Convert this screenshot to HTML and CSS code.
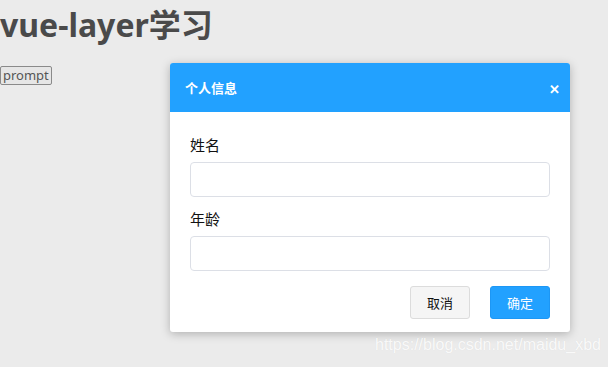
FILE: index.html
```html
<!DOCTYPE html>
<html lang="zh">
  <head>
    <meta charset="UTF-8" />
    <title>vue-layer学习</title>
    <link rel="stylesheet" href="styles.css">
  </head>
  <body>
    <h1>vue-layer学习</h1>
    <button class="promptBtn">prompt</button>

    <div class="layer">
      <div class="layerHead">
        <span class="layerTitle">个人信息</span>
        <span class="layerClose">&#x2715;</span>
      </div>
      <div class="layerBody">
        <label class="field">
          <span class="fieldLabel">姓名</span>
          <input class="fieldInput" type="text" />
        </label>
        <label class="field">
          <span class="fieldLabel">年龄</span>
          <input class="fieldInput" type="text" />
        </label>
        <div class="layerBtns">
          <button class="btn cancel">取消</button>
          <button class="btn ok">确定</button>
        </div>
      </div>
    </div>

    <span class="watermark">https://blog.csdn.net/maidu_xbd</span>
  </body>
</html>
```

FILE: styles.css
```css
* {
  box-sizing: border-box;
}
body {
  margin: 0;
  background-color: #ebebeb;
  font-family: "Noto Sans", "Noto Sans CJK SC", sans-serif;
  height: 367px;
  overflow: hidden;
  position: relative;
}
h1 {
  margin: 0;
  padding-top: 2px;
  font-size: 32px;
  line-height: 46px;
  color: #4a4a4a;
  font-weight: bold;
}
.promptBtn {
  margin-top: 18px;
  display: block;
  height: 19px;
  padding: 0 2px;
  font-family: "Noto Sans", "Noto Sans CJK SC", sans-serif;
  font-size: 13px;
  line-height: 15px;
  color: #555;
  background-color: #e6e6e6;
  border: 1px solid #8a8a8a;
  border-radius: 2px;
}
.layer {
  position: absolute;
  left: 170px;
  top: 63px;
  width: 400px;
  background-color: #fff;
  border-radius: 3px;
  box-shadow: 0 2px 10px rgba(0, 0, 0, 0.25);
  overflow: hidden;
}
.layerHead {
  height: 49px;
  background-color: #22a1ff;
  display: flex;
  align-items: center;
  justify-content: space-between;
  padding: 0 10px 0 15px;
  color: #fff;
}
.layerTitle {
  font-size: 13px;
  font-weight: bold;
}
.layerClose {
  font-size: 13px;
  font-weight: bold;
  padding-top: 2px;
}
.layerBody {
  padding: 21px 20px 13px;
}
.field {
  display: flex;
  flex-direction: column;
  margin-bottom: 10px;
}
.fieldLabel {
  font-size: 15px;
  line-height: 24px;
  color: #111;
  margin-bottom: 5px;
}
.fieldInput {
  height: 35px;
  border: 1px solid #dcdfe6;
  border-radius: 4px;
  outline: none;
}
.layerBtns {
  display: flex;
  justify-content: flex-end;
  gap: 20px;
  margin-top: 15px;
}
.btn {
  width: 60px;
  height: 33px;
  border-radius: 3px;
  font-family: "Noto Sans", "Noto Sans CJK SC", sans-serif;
  font-size: 13px;
  cursor: pointer;
}
.cancel {
  background-color: #f5f5f5;
  border: 1px solid #dcdcdc;
  color: #111;
}
.ok {
  background-color: #22a1ff;
  border: 1px solid #1d97f5;
  color: #fff;
}
.watermark {
  position: absolute;
  left: 375px;
  top: 336px;
  font-family: "Liberation Sans", Arial, sans-serif;
  font-size: 16px;
  color: rgba(255, 255, 255, 0.85);
  text-shadow: 0 0 1px rgba(0, 0, 0, 0.08);
}
```
